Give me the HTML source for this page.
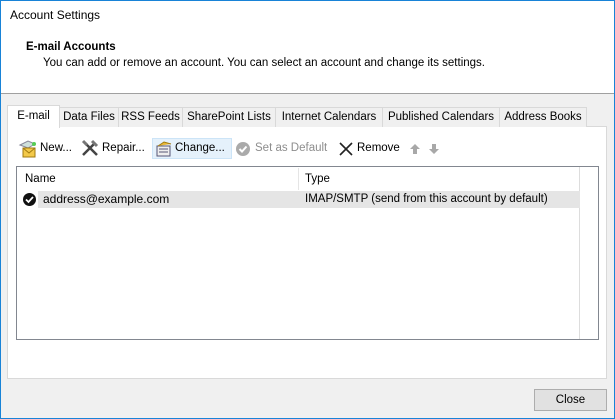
<!DOCTYPE html>
<html><head><style>
*{margin:0;padding:0;box-sizing:border-box}
body{width:615px;height:419px;overflow:hidden;font-family:"Liberation Sans",sans-serif;font-size:11.5px;color:#000;background:#f0f0f0;position:relative}
.a{position:absolute;white-space:nowrap}
.frame{position:absolute;left:0;top:0;width:615px;height:419px;border:1px solid #1883d7;pointer-events:none}
.tab{position:absolute;top:107px;height:20px;border:1px solid #d9d9d9;border-bottom:none;background:#f0f0f0;font-size:11.5px;line-height:18px;text-align:center}
</style></head><body>
<div class="a" style="left:0;top:0;width:615px;height:93px;background:#fff"></div>
<div class="a" style="left:0;top:93px;width:615px;height:1px;background:#a0a0a0"></div>
<div class="a" style="left:10px;top:8px;font-size:12px">Account Settings</div>
<div class="a" style="left:26px;top:41px;font-weight:bold">E-mail Accounts</div>
<div class="a" style="left:43px;top:57px">You can add or remove an account. You can select an account and change its settings.</div>

<div class="a" style="left:7px;top:126px;width:600px;height:253px;background:#fff;border:1px solid #d9d9d9"></div>
<div class="tab" style="left:59px;width:60px">Data Files</div>
<div class="tab" style="left:118px;width:65px">RSS Feeds</div>
<div class="tab" style="left:182px;width:94px">SharePoint Lists</div>
<div class="tab" style="left:275px;width:108px">Internet Calendars</div>
<div class="tab" style="left:382px;width:118px">Published Calendars</div>
<div class="tab" style="left:499px;width:88px">Address Books</div>
<div class="tab" style="left:7px;top:105px;width:53px;height:23px;background:#fff;line-height:20px">E-mail</div>

<svg class="a" style="left:18px;top:139px" width="20" height="20"><path d="M2 6 L10 2 L17 5 L10 9 Z" fill="#cfe0dc" stroke="#889"/><rect x="5" y="9" width="12" height="9" fill="#f3c94a" stroke="#a07a10"/><path d="M5 9 L11 14 L17 9" fill="none" stroke="#a07a10"/><circle cx="16" cy="5" r="2" fill="#5c5"/></svg>
<div class="a" style="left:40px;top:142px">New...</div>
<svg class="a" style="left:81px;top:139px" width="18" height="18"><path d="M2 16 L14 4 M4 4 L16 16" stroke="#444" stroke-width="2.5"/><path d="M11 2 L16 7" stroke="#777" stroke-width="3"/><path d="M2 2 L6 6" stroke="#777" stroke-width="3"/></svg>
<div class="a" style="left:102px;top:142px">Repair...</div>
<div class="a" style="left:152px;top:138px;width:80px;height:21px;background:#e5f1fb;border:1px solid #cce4f7"></div>
<svg class="a" style="left:155px;top:140px" width="18" height="18"><rect x="2" y="6" width="13" height="10" fill="#eee" stroke="#557"/><path d="M4 9h9M4 12h9" stroke="#557"/><path d="M3 6 L9 2 L16 4" fill="#e8b83a" stroke="#a07a10"/></svg>
<div class="a" style="left:175px;top:142px">Change...</div>
<svg class="a" style="left:235px;top:141px" width="16" height="16"><circle cx="8" cy="8" r="7" fill="#aaa"/><path d="M4.5 8 L7 10.5 L11.5 5.5" stroke="#fff" stroke-width="2" fill="none"/></svg>
<div class="a" style="left:255px;top:142px;color:#8d8d8d">Set as Default</div>
<svg class="a" style="left:339px;top:142px" width="14" height="14"><path d="M1 1 L13 13 M13 1 L1 13" stroke="#222" stroke-width="1.6"/></svg>
<div class="a" style="left:357px;top:142px">Remove</div>
<svg class="a" style="left:410px;top:143px" width="30" height="12"><path d="M5 1 L10 6 H7 V11 H3 V6 H0 Z" fill="#a8a8a8"/><path d="M24 11 L29 6 H26 V1 H22 V6 H19 Z" fill="#a8a8a8"/></svg>

<div class="a" style="left:16px;top:166px;width:583px;height:174px;border:1px solid #828790;background:#fff"></div>
<div class="a" style="left:579px;top:167px;width:1px;height:172px;background:#ddd"></div>
<div class="a" style="left:298px;top:168px;width:1px;height:22px;background:#e5e5e5"></div>
<div class="a" style="left:25px;top:173px">Name</div>
<div class="a" style="left:305px;top:173px">Type</div>
<div class="a" style="left:38px;top:191px;width:542px;height:17px;background:#e5e5e5"></div>
<svg class="a" style="left:22px;top:192px" width="15" height="15"><circle cx="7.5" cy="7.5" r="6.5" fill="#111"/><path d="M4 7.5 L6.5 10 L11 5" stroke="#fff" stroke-width="1.8" fill="none"/></svg>
<div class="a" style="left:43px;top:192px;font-size:12px">address@example.com</div>
<div class="a" style="left:305px;top:193px">IMAP/SMTP (send from this account by default)</div>

<div class="a" style="left:534px;top:389px;width:73px;height:22px;background:#e1e1e1;border:1px solid #adadad;text-align:center;line-height:20px">Close</div>
<div class="frame"></div>
</body></html>
